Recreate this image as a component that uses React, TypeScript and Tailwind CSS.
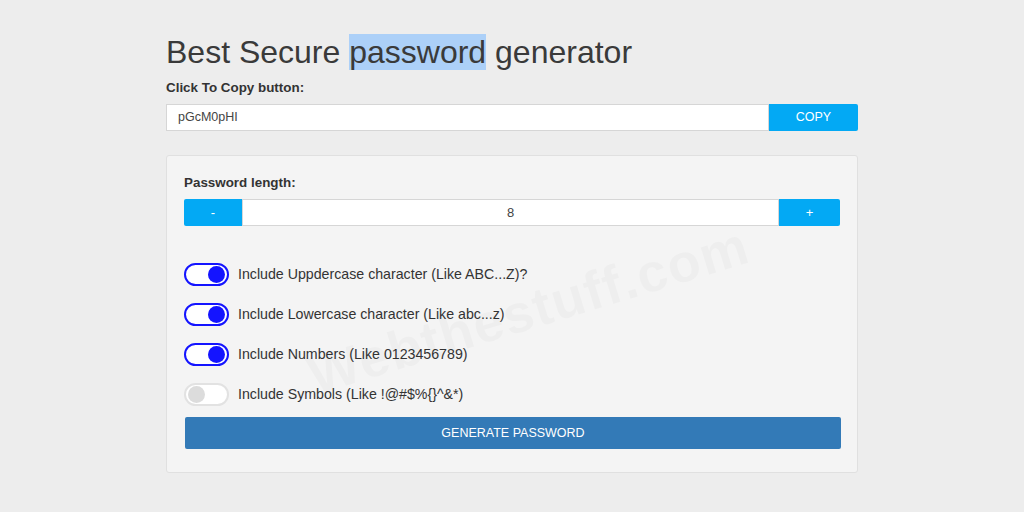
import { useState } from "react";

const options = [
    { label: "Include Uppdercase character (Like ABC...Z)?", on: true },
    { label: "Include Lowercase character (Like abc...z)", on: true },
    { label: "Include Numbers (Like 0123456789)", on: true },
    { label: "Include Symbols (Like !@#$%{}^&*)", on: false },
];

const Toggle = ({ on }: { on: boolean }) => (
    <div
        className={
            on
                ? "w-[45px] h-[23px] rounded-full bg-white border-2 border-[#1414ff] flex items-center justify-end px-[2px]"
                : "w-[45px] h-[23px] rounded-full bg-white border-2 border-[#e2e2e2] flex items-center justify-start px-[2px]"
        }
    >
        <div className={on ? "w-[17px] h-[17px] rounded-full bg-[#1414ff]" : "w-[17px] h-[17px] rounded-full bg-[#dcdcdc]"} />
    </div>
);

export default function App() {
    const [length] = useState(8);

    return (
        <div
            className="relative w-[1024px] h-[512px] bg-[#ededed] text-[#333] overflow-hidden"
            style={{ fontFamily: '"Liberation Sans", Arial, sans-serif' }}
        >
            <div className="w-[692px] ml-[166px] pt-[34px]">
                <h1 className="text-[32px] leading-[36px] text-[#3a3a3a]">
                    Best Secure <span className="bg-[#acd0f8]">password</span> generator
                </h1>
                <div className="mt-[10px] text-[13.4px] font-bold leading-[16px] text-[#333]">Click To Copy button:</div>
                <div className="mt-[8px] flex h-[27px]">
                    <div className="flex-1 bg-white border border-[#d6d6d6] flex items-center px-[11px] text-[12.5px] text-[#444]">
                        pGcM0pHI
                    </div>
                    <button className="w-[89px] bg-[#03a9f4] text-white text-[12.5px] rounded-r-[2px]">COPY</button>
                </div>

                <div className="mt-[24px] bg-[#f4f4f4] border border-[#e0e0e0] rounded-[3px] px-[17px] pt-[19px] pb-[23px]">
                    <div className="text-[13.4px] font-bold leading-[16px] text-[#333]">Password length:</div>
                    <div className="mt-[8px] flex h-[27px]">
                        <button className="w-[58px] bg-[#03a9f4] text-white text-[13px] rounded-l-[2px]">-</button>
                        <div className="flex-1 bg-white border border-[#d6d6d6] flex items-center justify-center text-[13px] text-[#444]">
                            {length}
                        </div>
                        <button className="w-[61px] bg-[#03a9f4] text-white text-[13px] rounded-r-[2px]">+</button>
                    </div>

                    <div className="mt-[37px] flex flex-col gap-[17px]">
                        {options.map((o) => (
                            <div key={o.label} className="flex items-center gap-[9px]">
                                <Toggle on={o.on} />
                                <span className="text-[14.2px] text-[#333]">{o.label}</span>
                            </div>
                        ))}
                    </div>

                    <button className="mt-[11px] w-full ml-[1px] h-[32px] bg-[#337ab7] text-white text-[12.5px] rounded-[2px]">
                        GENERATE PASSWORD
                    </button>
                </div>
            </div>

            {/* faint watermark over the card */}
            <div className="absolute left-[300px] top-[270px] -rotate-[17deg] text-[54px] font-bold text-black/[0.025] pointer-events-none select-none tracking-wide">
                Webthestuff.com
            </div>
        </div>
    );
}
